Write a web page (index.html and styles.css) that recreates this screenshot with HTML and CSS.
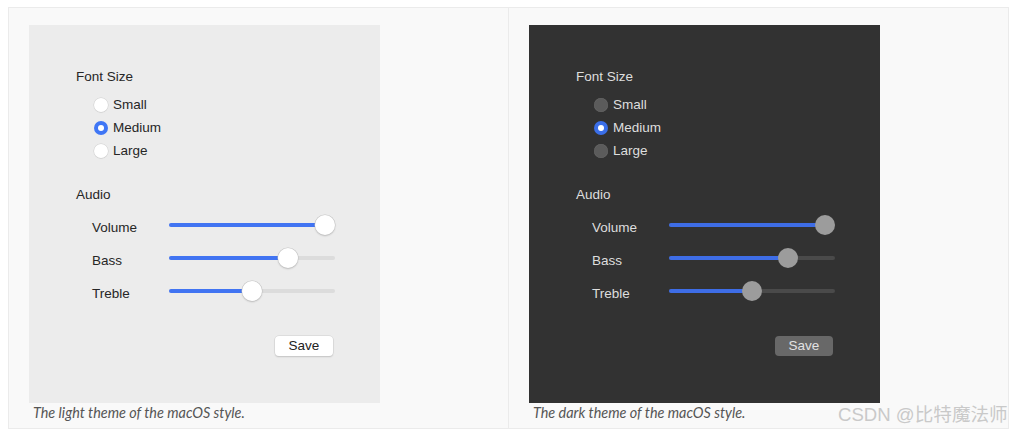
FILE: index.html
```html
<!DOCTYPE html>
<html>
<head>
<meta charset="utf-8">
<link rel="stylesheet" href="styles.css">
</head>
<body>
<div class="frame">
  <div class="cell">
    <div class="panel light">
      <div class="group-title">Font Size</div>
      <div class="radios">
        <div class="radio-row"><span class="radio"></span><span>Small</span></div>
        <div class="radio-row"><span class="radio on"></span><span>Medium</span></div>
        <div class="radio-row"><span class="radio"></span><span>Large</span></div>
      </div>
      <div class="group-title audio">Audio</div>
      <div class="sliders">
        <div class="slider-row"><span class="slabel">Volume</span><div class="track"><div class="fill" style="width:156px"></div><span class="thumb" style="left:146px"></span></div></div>
        <div class="slider-row"><span class="slabel">Bass</span><div class="track"><div class="fill" style="width:119px"></div><span class="thumb" style="left:109px"></span></div></div>
        <div class="slider-row"><span class="slabel">Treble</span><div class="track"><div class="fill" style="width:83px"></div><span class="thumb" style="left:73px"></span></div></div>
      </div>
      <div class="actions"><button class="save">Save</button></div>
    </div>
    <div class="caption">The light theme of the macOS style.</div>
  </div>
  <div class="cell second">
    <div class="panel dark">
      <div class="group-title">Font Size</div>
      <div class="radios">
        <div class="radio-row"><span class="radio"></span><span>Small</span></div>
        <div class="radio-row"><span class="radio on"></span><span>Medium</span></div>
        <div class="radio-row"><span class="radio"></span><span>Large</span></div>
      </div>
      <div class="group-title audio">Audio</div>
      <div class="sliders">
        <div class="slider-row"><span class="slabel">Volume</span><div class="track"><div class="fill" style="width:156px"></div><span class="thumb" style="left:146px"></span></div></div>
        <div class="slider-row"><span class="slabel">Bass</span><div class="track"><div class="fill" style="width:119px"></div><span class="thumb" style="left:109px"></span></div></div>
        <div class="slider-row"><span class="slabel">Treble</span><div class="track"><div class="fill" style="width:83px"></div><span class="thumb" style="left:73px"></span></div></div>
      </div>
      <div class="actions"><button class="save">Save</button></div>
    </div>
    <div class="caption">The dark theme of the macOS style.</div>
  </div>
</div>
<div class="watermark">CSDN @比特魔法师</div>
</body>
</html>
```
FILE: styles.css
```css
html, body { margin: 0; padding: 0; background: #ffffff; }
body { padding: 7px 0 0 8px; position: relative; height: 434px; box-sizing: border-box; overflow: hidden; }
.frame {
  display: grid;
  grid-template-columns: 499px 500px;
  width: 999px;
  border: 1px solid #ebebeb;
  background: #f9f9f9;
}
.cell { padding: 17px 0 6px 20px; }
.cell.second { border-left: 1px solid #ebebeb; }
.panel {
  width: 351px;
  height: 378px;
  box-sizing: border-box;
  padding: 44px 45px 0 47px;
  display: flex;
  flex-direction: column;
  font-family: "Liberation Sans", Arial, sans-serif;
  font-size: 13.5px;
}
.light { background: #ececec; color: #262626; }
.dark { background: #323232; color: #dedede; }
.group-title { line-height: 16px; height: 16px; }
.group-title.audio { margin-top: 25px; }
.radios { margin-top: 8px; margin-left: 18px; display: flex; flex-direction: column; }
.radio-row { height: 23px; display: flex; align-items: center; gap: 5px; }
.radio { width: 14px; height: 14px; border-radius: 50%; box-sizing: border-box; position: relative; }
.light .radio { background: #ffffff; box-shadow: 0 0 0 0.5px #cfcfcf, 0 0.5px 1px rgba(0,0,0,0.15); }
.dark .radio { background: #5b5b5b; box-shadow: inset 0 0 0 0.5px #666; }
.radio.on { background: #3f76f5 !important; box-shadow: none; }
.dark .radio.on { background: #3a6ee8 !important; }
.radio.on::after {
  content: "";
  position: absolute;
  left: 4px; top: 4px;
  width: 6px; height: 6px;
  border-radius: 50%;
  background: #ffffff;
}
.sliders { margin-top: 7px; margin-left: 16px; display: flex; flex-direction: column; }
.slider-row { height: 33px; display: flex; align-items: center; }
.slabel { width: 77px; flex-shrink: 0; padding-top: 1px; }
.track { width: 166px; flex-shrink: 0; height: 4px; border-radius: 2px; position: relative; margin-top: -3px; }
.light .track { background: #dcdcdc; }
.dark .track { background: #4a4a4a; }
.fill { height: 4px; border-radius: 2px; background: #4174f2; }
.dark .fill { background: #3e6de6; }
.thumb {
  position: absolute;
  top: -8px;
  width: 20px; height: 20px;
  border-radius: 50%;
  box-sizing: border-box;
}
.light .thumb { background: #ffffff; box-shadow: 0 0 0 0.5px #c4c4c4, 0 1px 2px rgba(0,0,0,0.2); }
.dark .thumb { background: #9c9c9c; }
.actions { display: flex; justify-content: flex-end; margin-top: 27px; padding-right: 2px; }
.save {
  width: 58px; height: 20px;
  border-radius: 4px;
  font-family: "Liberation Sans", Arial, sans-serif;
  font-size: 13.5px;
  padding: 0;
  line-height: 18px;
  border: none;
}
.light .save { background: #ffffff; color: #222; box-shadow: 0 0 0 0.5px #cfcfcf, 0 1px 1.5px rgba(0,0,0,0.2); }
.dark .save { background: #686868; color: #e2e2e2; }
.caption {
  font-family: Lato, "Open Sans", sans-serif;
  font-style: italic;
  font-size: 14.4px;
  line-height: 18px;
  color: #555;
  padding-left: 4px;
  padding-top: 1px;
}
.watermark {
  position: absolute;
  left: 838px;
  top: 403px;
  font-family: "Liberation Sans", "Noto Sans CJK SC", sans-serif;
  font-size: 18.6px;
  line-height: 24px;
  color: #c9c9c9;
  white-space: nowrap;
}
```
